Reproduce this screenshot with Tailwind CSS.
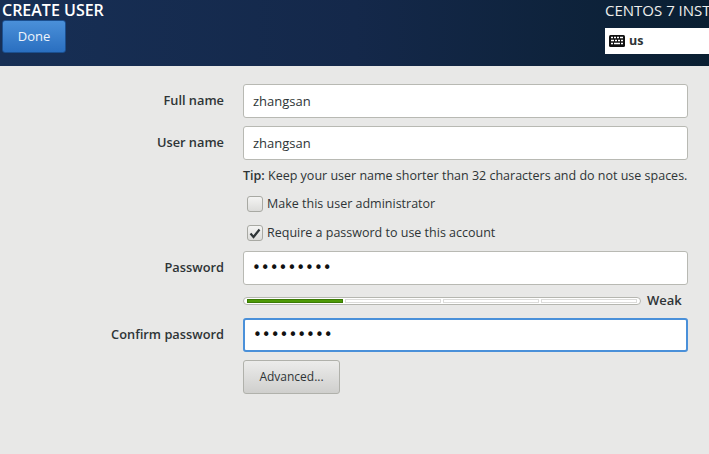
<!DOCTYPE html>
<html lang="en">
<head>
    <meta charset="UTF-8">
    <title>Create User</title>
    <script src="https://cdn.jsdelivr.net/npm/@tailwindcss/browser@4"></script>
</head>
<body class="bg-[#e8e8e7] h-[454px] w-[709px] overflow-hidden font-['Open_Sans',sans-serif] text-[12.5px] text-[#2e3436]">
    <header class="h-[66px] flex justify-between overflow-hidden bg-gradient-to-r from-[#172f55] via-[#14284a] to-[#0a1f32]">
        <div class="pl-[2px]">
            <h1 class="text-[16px] leading-[20px] font-semibold text-white whitespace-nowrap">CREATE USER</h1>
            <button class="block w-[64px] h-[33px] rounded-[3px] border border-[#1b4f8f] bg-gradient-to-b from-[#4a90d9] to-[#2a6fc0] text-[#eef4fb] text-[13px]">Done</button>
        </div>
        <div class="w-[104px] shrink-0 overflow-hidden">
            <div class="text-[15px] leading-[20px] text-[#eeeeec] whitespace-nowrap">CENTOS 7 INST</div>
            <div class="mt-[8px] h-[26px] bg-white flex items-center pl-[4px] gap-[4px] font-bold text-[#2e3436]">
                <svg width="16" height="12" viewBox="0 0 16 12"><rect width="16" height="12" rx="1.5" fill="#111"/><path d="M2 2.5h2M5 2.5h2M8 2.5h2M11 2.5h3M2 5.5h3M6 5.5h2M9 5.5h2M12 5.5h2M2 8.5h2M5 8.5h6M12 8.5h2" stroke="#fff" stroke-width="1.4"/></svg>
                <span>us</span>
            </div>
        </div>
    </header>
    <main class="grid grid-cols-[224px_445px] gap-x-[19px] pt-[18px] items-center">
        <label class="text-right font-semibold text-[12.8px]">Full name</label>
        <input type="text" value="zhangsan" class="h-[34px] px-[9px] bg-white border border-[#b8b9b3] rounded-[3px] text-[13px]">

        <label class="mt-[8px] text-right font-semibold text-[12.8px]">User name</label>
        <input type="text" value="zhangsan" class="mt-[8px] h-[34px] px-[9px] bg-white border border-[#b8b9b3] rounded-[3px] text-[13px]">

        <p class="col-start-2 mt-[8px] leading-[16px] whitespace-nowrap"><b class="font-semibold">Tip:</b> Keep your user name shorter than 32 characters and do not use spaces.</p>

        <label class="col-start-2 mt-[11px] h-[18px] pl-[4px] flex items-center gap-[4px]">
            <span class="w-[16px] h-[16px] rounded-[3px] border border-[#a8a9a3] bg-gradient-to-b from-[#f4f4f3] to-[#dcdcda]"></span>
            Make this user administrator
        </label>
        <label class="col-start-2 mt-[11px] h-[18px] pl-[4px] flex items-center gap-[4px]">
            <span class="w-[16px] h-[16px] rounded-[3px] border border-[#a8a9a3] bg-gradient-to-b from-[#f4f4f3] to-[#dcdcda] flex items-center justify-center">
                <svg width="12" height="11" viewBox="0 0 12 11"><path d="M1.5 5.5 4.5 9 10.5 1.5" fill="none" stroke="#2e3436" stroke-width="2.2"/></svg>
            </span>
            Require a password to use this account
        </label>

        <label class="mt-[9px] text-right font-semibold text-[12.8px]">Password</label>
        <input type="password" value="123456789" class="mt-[9px] h-[34px] px-[8px] bg-white border border-[#b8b9b3] rounded-[3px] text-[#111] text-[15px] font-['DejaVu_Sans',sans-serif]">

        <div class="col-start-2 mt-[12px] h-[8px] flex items-center">
            <div class="w-[398px] h-[8px] bg-white border border-[#b5b6b0] rounded-[4px] p-[1px] pl-[3px] pr-[3px] grid grid-cols-4 gap-[2px]">
                <span class="bg-[#4e9a06] border border-[#3a7a04]"></span>
                <span class="border border-[#dcdcda]"></span>
                <span class="border border-[#dcdcda]"></span>
                <span class="border border-[#dcdcda]"></span>
            </div>
            <span class="ml-[6px] font-semibold text-[13px]">Weak</span>
        </div>

        <label class="mt-[13px] text-right font-semibold text-[12.8px]">Confirm password</label>
        <input type="password" value="123456789" class="mt-[13px] h-[34px] px-[8px] bg-white border-2 border-[#4a90d9] rounded-[3px] text-[#111] text-[15px] font-['DejaVu_Sans',sans-serif]">

        <button class="col-start-2 mt-[8px] w-[97px] h-[34px] rounded-[3px] border border-[#b0b1ab] bg-gradient-to-b from-[#ececeb] to-[#cfcfcd] text-[12px]">Advanced...</button>
    </main>
</body>
</html>
